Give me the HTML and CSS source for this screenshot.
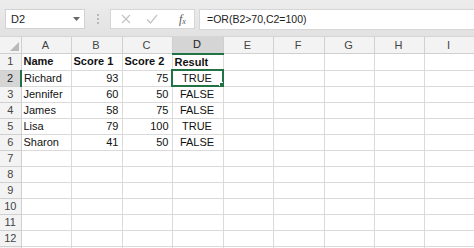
FILE: index.html
```html
<!DOCTYPE html>
<html>
<head>
<meta charset="utf-8">
<link rel="stylesheet" href="styles.css">
</head>
<body>
<div class="toolbar">
  <div class="namebox"><span class="nb-text">D2</span><svg class="nb-arrow" width="7" height="4" viewBox="0 0 7 4"><path d="M0 0H7L3.5 4Z" fill="#666"/></svg></div>
  <div class="sep"><i></i><i></i><i></i></div>
  <div class="fxbox">
    <svg class="ico" width="10" height="10" viewBox="0 0 10 10"><path d="M1 1L9 9M9 1L1 9" stroke="#c3c3c3" stroke-width="1.2"/></svg>
    <svg class="ico" width="12" height="10" viewBox="0 0 12 10"><path d="M1 5.5L4.5 9L11 1" stroke="#c3c3c3" stroke-width="1.2" fill="none"/></svg>
    <span class="fx">f<sub>x</sub></span>
  </div>
  <div class="formula">=OR(B2&gt;70,C2=100)</div>
</div>
<table class="sheet">
  <colgroup>
    <col class="w-rh"><col class="w50"><col class="w51"><col class="w50"><col class="w51"><col class="w50"><col class="w51"><col class="w50"><col class="w50"><col class="w50">
  </colgroup>
  <tr class="hdr">
    <th class="corner"><svg width="9" height="9" viewBox="0 0 9 9"><path d="M9 0V9H0Z" fill="#b9b9b9"/></svg></th>
    <th>A</th><th>B</th><th>C</th><th class="sel-col">D</th><th>E</th><th>F</th><th>G</th><th>H</th><th>I</th>
  </tr>
  <tr><th>1</th><td class="b">Name</td><td class="b">Score 1</td><td class="b">Score 2</td><td class="b">Result</td><td></td><td></td><td></td><td></td><td></td></tr>
  <tr><th class="sel-row">2</th><td>Richard</td><td class="n">93</td><td class="n">75</td><td class="c active">TRUE<span class="handle"></span></td><td></td><td></td><td></td><td></td><td></td></tr>
  <tr><th>3</th><td>Jennifer</td><td class="n">60</td><td class="n">50</td><td class="c">FALSE</td><td></td><td></td><td></td><td></td><td></td></tr>
  <tr><th>4</th><td>James</td><td class="n">58</td><td class="n">75</td><td class="c">FALSE</td><td></td><td></td><td></td><td></td><td></td></tr>
  <tr><th>5</th><td>Lisa</td><td class="n">79</td><td class="n">100</td><td class="c">TRUE</td><td></td><td></td><td></td><td></td><td></td></tr>
  <tr><th>6</th><td>Sharon</td><td class="n">41</td><td class="n">50</td><td class="c">FALSE</td><td></td><td></td><td></td><td></td><td></td></tr>
  <tr><th>7</th><td></td><td></td><td></td><td></td><td></td><td></td><td></td><td></td><td></td></tr>
  <tr><th>8</th><td></td><td></td><td></td><td></td><td></td><td></td><td></td><td></td><td></td></tr>
  <tr><th>9</th><td></td><td></td><td></td><td></td><td></td><td></td><td></td><td></td><td></td></tr>
  <tr><th>10</th><td></td><td></td><td></td><td></td><td></td><td></td><td></td><td></td><td></td></tr>
  <tr><th>11</th><td></td><td></td><td></td><td></td><td></td><td></td><td></td><td></td><td></td></tr>
  <tr><th>12</th><td></td><td></td><td></td><td></td><td></td><td></td><td></td><td></td><td></td></tr>
  <tr><th>13</th><td></td><td></td><td></td><td></td><td></td><td></td><td></td><td></td><td></td></tr>
</table>
</body>
</html>
```
FILE: styles.css
```css
html, body {
  margin: 0;
  padding: 0;
  background: #fff;
  overflow: hidden;
  font-family: "Liberation Sans", Arial, sans-serif;
  color: #111;
}
.toolbar {
  height: 37px;
  box-sizing: border-box;
  background: linear-gradient(#ececec, #e2e2e2);
  display: flex;
  align-items: flex-start;
  padding-top: 9px;
  border-bottom: 1px solid #d6d6d6;
}
.namebox {
  margin-left: 5px;
  width: 80px;
  height: 20px;
  box-sizing: border-box;
  background: #fff;
  border: 1px solid #d2d2d2;
  display: flex;
  align-items: center;
  justify-content: space-between;
  padding: 0 4px 0 5px;
  font-size: 11px;
  color: #222;
}
.sep {
  width: 25px;
  height: 20px;
  display: flex;
  flex-direction: column;
  align-items: center;
  justify-content: center;
  gap: 2px;
}
.sep i {
  display: block;
  width: 2px;
  height: 2px;
  background: #b8b8b8;
}
.fxbox {
  width: 85px;
  height: 20px;
  box-sizing: border-box;
  background: #fff;
  border: 1px solid #d6d6d6;
  display: flex;
  align-items: center;
  padding-left: 10px;
  gap: 15px;
}
.ico { display: block; }
.fx {
  margin-left: 6px;
  font-family: "Liberation Serif", serif;
  font-style: italic;
  font-size: 12px;
  color: #555;
}
.fx sub { font-size: 8px; vertical-align: -1px; }
.formula {
  margin-left: 4px;
  flex: 1;
  height: 21px;
  box-sizing: border-box;
  background: #fff;
  border: 1px solid #d6d6d6;
  border-right: none;
  font-size: 10.5px;
  line-height: 19px;
  padding-left: 7px;
  color: #222;
}
.sheet {
  border-collapse: collapse;
  table-layout: fixed;
  width: 474px;
  font-size: 11px;
}
.w-rh { width: 21px; }
.w50 { width: 50px; }
.w51 { width: 51px; }
.sheet th, .sheet td {
  height: 15px;
  padding: 0 3px 0 2px;
  border: 1px solid #dadada;
  white-space: nowrap;
  overflow: hidden;
  line-height: 15px;
}
.sheet tr.hdr th {
  height: 14px;
  background: #f3f3f3;
  color: #444;
  font-weight: normal;
  text-align: center;
  border-color: #d0d0d0;
  border-top: none;
}
.sheet tr th:first-child {
  background: #f3f3f3;
  color: #444;
  font-weight: normal;
  text-align: center;
  padding: 0;
  border-color: #d0d0d0;
  border-left: none;
}
.sheet tr.hdr th.corner {
  text-align: right;
  vertical-align: bottom;
  padding: 0 2px 2px 0;
}
.corner svg { display: block; margin-left: auto; }
.sheet tr.hdr th.sel-col {
  background: #d5d5d5;
  color: #222;
  border-bottom: 2px solid #217346;
}
.sheet tr th.sel-row {
  background: #d5d5d5;
  color: #222;
  border-right: 2px solid #217346;
}
.b { font-weight: bold; }
.n { text-align: right; }
.c { text-align: center; }
.sheet td.active {
  position: relative;
  outline: 2px solid #217346;
  outline-offset: -1px;
}
.handle {
  position: absolute;
  right: -3px;
  bottom: -3px;
  width: 5px;
  height: 5px;
  background: #217346;
  border: 1px solid #fff;
}
```
